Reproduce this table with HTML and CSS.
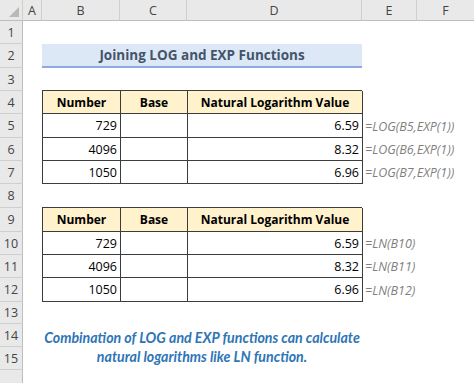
FILE: index.html
```html
<!DOCTYPE html>
<html>
<head>
<meta charset="utf-8">
<link rel="stylesheet" href="styles.css">
</head>
<body>
<div class="sheet">
  <div class="corner"><span class="tri"></span></div>
  <div class="ch">A</div>
  <div class="ch">B</div>
  <div class="ch">C</div>
  <div class="ch">D</div>
  <div class="ch">E</div>
  <div class="ch last">F</div>

  <div class="rh r1">1</div>
  <div class="rh r2">2</div>
  <div class="rh r3">3</div>
  <div class="rh r4">4</div>
  <div class="rh r5">5</div>
  <div class="rh r6">6</div>
  <div class="rh r7">7</div>
  <div class="rh r8">8</div>
  <div class="rh r9">9</div>
  <div class="rh r10">10</div>
  <div class="rh r11">11</div>
  <div class="rh r12">12</div>
  <div class="rh r13">13</div>
  <div class="rh r14">14</div>
  <div class="rh r15">15</div>
  <div class="rh r16"></div>

  <div class="title">Joining LOG and EXP Functions</div>

  <div class="tbl t1">
    <div class="th">Number</div><div class="th">Base</div><div class="th">Natural Logarithm Value</div>
    <div class="td num">729</div><div class="td"></div><div class="td num">6.59</div>
    <div class="td num">4096</div><div class="td"></div><div class="td num">8.32</div>
    <div class="td num">1050</div><div class="td"></div><div class="td num">6.96</div>
  </div>
  <div class="fx f5">=LOG(B5,EXP(1))</div>
  <div class="fx f6">=LOG(B6,EXP(1))</div>
  <div class="fx f7">=LOG(B7,EXP(1))</div>

  <div class="tbl t2">
    <div class="th">Number</div><div class="th">Base</div><div class="th">Natural Logarithm Value</div>
    <div class="td num">729</div><div class="td"></div><div class="td num">6.59</div>
    <div class="td num">4096</div><div class="td"></div><div class="td num">8.32</div>
    <div class="td num">1050</div><div class="td"></div><div class="td num">6.96</div>
  </div>
  <div class="fx f10">=LN(B10)</div>
  <div class="fx f11">=LN(B11)</div>
  <div class="fx f12">=LN(B12)</div>

  <div class="note">Combination of LOG and EXP functions can calculate<br>natural logarithms like LN function.</div>
</div>
</body>
</html>
```

FILE: styles.css
```css
html, body {
  margin: 0;
  padding: 0;
  background: #ffffff;
}
body {
  width: 474px;
  height: 383px;
  overflow: hidden;
  font-family: "Open Sans", "Liberation Sans", sans-serif;
}
.sheet {
  display: grid;
  grid-template-columns: 23px 19px 78px 67px 175px 55px 57px;
  grid-template-rows: 21px 23px 24px 23px 23px 24px 23px 23px 24px 24px 23px 23px 24px 22px 23px 23px 13px;
  width: 474px;
  height: 383px;
}
.corner {
  grid-column: 1;
  grid-row: 1;
  background: #e9e9e9;
  border-right: 1px solid #cfcfcf;
  border-bottom: 1px solid #bdbdbd;
  position: relative;
}
.tri {
  position: absolute;
  right: 3px;
  bottom: 3px;
  width: 0;
  height: 0;
  border-left: 10px solid transparent;
  border-bottom: 10px solid #b9b9b9;
}
.ch {
  grid-row: 1;
  background: #e9e9e9;
  border-right: 1px solid #cfcfcf;
  border-bottom: 1px solid #bdbdbd;
  display: flex;
  align-items: center;
  justify-content: center;
  font-size: 12.5px;
  color: #444444;
}
.ch.last { border-right: none; }
.rh {
  grid-column: 1;
  background: #e9e9e9;
  border-right: 1px solid #bdbdbd;
  border-bottom: 1px solid #cfcfcf;
  display: flex;
  align-items: center;
  justify-content: center;
  font-size: 12.5px;
  color: #444444;
}
.r1 { grid-row: 2; } .r2 { grid-row: 3; } .r3 { grid-row: 4; } .r4 { grid-row: 5; }
.r5 { grid-row: 6; } .r6 { grid-row: 7; } .r7 { grid-row: 8; } .r8 { grid-row: 9; }
.r9 { grid-row: 10; } .r10 { grid-row: 11; } .r11 { grid-row: 12; } .r12 { grid-row: 13; }
.r13 { grid-row: 14; } .r14 { grid-row: 15; } .r15 { grid-row: 16; } .r16 { grid-row: 17; border-bottom: none; }

.title {
  grid-column: 3 / 6;
  grid-row: 3;
  background: #dde8f6;
  border-bottom: 2px solid #8ea9db;
  display: flex;
  align-items: center;
  justify-content: center;
  font-weight: 700;
  font-size: 13.5px;
  color: #44546a;
}
.tbl {
  grid-column: 3 / 6;
  display: grid;
  grid-template-columns: 78px 67px 175px;
  grid-template-rows: 23px 24px 23px 23px;
  border-top: 1px solid #3c3c3c;
  border-left: 1px solid #3c3c3c;
  margin-top: -1px;
}
.t1 { grid-row: 5 / 9; }
.t2 { grid-row: 10 / 14; grid-template-rows: 24px 23px 23px 24px; }
.th, .td {
  border-right: 1px solid #3c3c3c;
  border-bottom: 1px solid #3c3c3c;
  display: flex;
  align-items: center;
  font-size: 12.5px;
  color: #000000;
}
.th {
  background: #fff2cc;
  justify-content: center;
  font-weight: 700;
  font-size: 12px;
}
.td.num {
  justify-content: flex-end;
  padding-right: 3px;
}
.fx {
  grid-column: 6 / 8;
  display: flex;
  align-items: center;
  padding-left: 3px;
  font-style: italic;
  font-size: 12.5px;
  color: #7f7f7f;
  white-space: nowrap;
}
.f5 { grid-row: 6; } .f6 { grid-row: 7; } .f7 { grid-row: 8; }
.f10 { grid-row: 11; } .f11 { grid-row: 12; } .f12 { grid-row: 13; }
.note {
  grid-column: 3 / 6;
  grid-row: 15 / 17;
  display: flex;
  align-items: center;
  justify-content: center;
  text-align: center;
  font-family: "Lato", sans-serif;
  font-weight: 700;
  font-style: italic;
  font-size: 14.2px;
  line-height: 19px;
  color: #2e75b6;
  white-space: nowrap;
}
```
